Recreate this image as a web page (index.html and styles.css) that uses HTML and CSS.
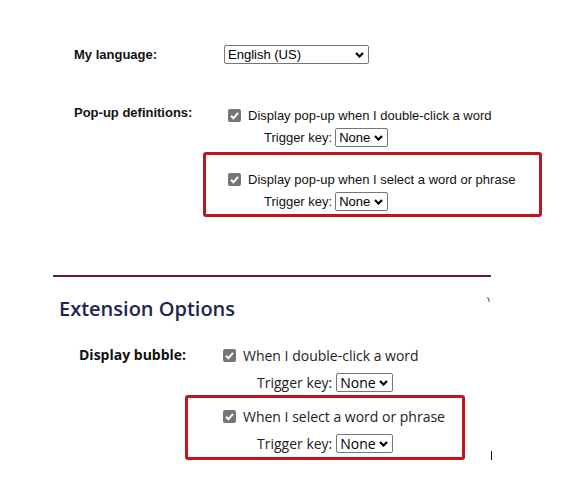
FILE: index.html
```html
<!DOCTYPE html>
<html lang="en">
<head>
<meta charset="utf-8">
<title>Options</title>
<link rel="stylesheet" href="styles.css">
</head>
<body>
<div class="page">
  <section class="site-settings">
    <div class="row row-lang">
      <div class="label">My language:</div>
      <div class="field">
        <span class="select-wrap">
          <select class="select select-lang"><option>English (US)</option></select>
          <svg class="chev" width="9" height="6" viewBox="0 0 9 6"><path d="M1 1 L4.5 4.5 L8 1" fill="none" stroke="#000" stroke-width="2.2"/></svg>
        </span>
      </div>
    </div>
    <div class="row row-popup">
      <div class="label">Pop-up definitions:</div>
      <div class="field">
        <div class="opt">
          <label class="check-line"><span class="cb"><svg width="13" height="13" viewBox="0 0 13 13"><rect width="13" height="13" rx="2" fill="#767676"/><path d="M3 6.8 L5.4 9.2 L10 3.8" fill="none" stroke="#fff" stroke-width="2"/></svg></span>Display pop-up when I double-click a word</label>
          <div class="trigger">Trigger key:<span class="select-wrap key"><select class="select select-key"><option>None</option></select><svg class="chev" width="9" height="6" viewBox="0 0 9 6"><path d="M1 1 L4.5 4.5 L8 1" fill="none" stroke="#000" stroke-width="2.2"/></svg></span></div>
        </div>
        <div class="opt highlight">
          <label class="check-line"><span class="cb"><svg width="13" height="13" viewBox="0 0 13 13"><rect width="13" height="13" rx="2" fill="#767676"/><path d="M3 6.8 L5.4 9.2 L10 3.8" fill="none" stroke="#fff" stroke-width="2"/></svg></span>Display pop-up when I select a word or phrase</label>
          <div class="trigger">Trigger key:<span class="select-wrap key"><select class="select select-key"><option>None</option></select><svg class="chev" width="9" height="6" viewBox="0 0 9 6"><path d="M1 1 L4.5 4.5 L8 1" fill="none" stroke="#000" stroke-width="2.2"/></svg></span></div>
        </div>
      </div>
    </div>
  </section>

  <hr class="divider">

  <section class="ext">
    <h2 class="ext-title">Extension Options</h2>
    <div class="row">
      <div class="label">Display bubble:</div>
      <div class="field">
        <div class="opt">
          <label class="check-line"><span class="cb"><svg width="13" height="13" viewBox="0 0 13 13"><rect width="13" height="13" rx="2" fill="#767676"/><path d="M3 6.8 L5.4 9.2 L10 3.8" fill="none" stroke="#fff" stroke-width="2"/></svg></span>When I double-click a word</label>
          <div class="trigger">Trigger key:<span class="select-wrap key"><select class="select select-key"><option>None</option></select><svg class="chev" width="9" height="6" viewBox="0 0 9 6"><path d="M1 1 L4.5 4.5 L8 1" fill="none" stroke="#000" stroke-width="2.2"/></svg></span></div>
        </div>
        <div class="opt highlight">
          <label class="check-line"><span class="cb"><svg width="13" height="13" viewBox="0 0 13 13"><rect width="13" height="13" rx="2" fill="#767676"/><path d="M3 6.8 L5.4 9.2 L10 3.8" fill="none" stroke="#fff" stroke-width="2"/></svg></span>When I select a word or phrase</label>
          <div class="trigger">Trigger key:<span class="select-wrap key"><select class="select select-key"><option>None</option></select><svg class="chev" width="9" height="6" viewBox="0 0 9 6"><path d="M1 1 L4.5 4.5 L8 1" fill="none" stroke="#000" stroke-width="2.2"/></svg></span></div>
        </div>
      </div>
    </div>
    <span class="tick-mark"></span>
    <span class="caret-mark"></span>
  </section>
</div>
</body>
</html>
```

FILE: styles.css
```css
html, body {
  margin: 0;
  padding: 0;
  background: #fff;
}

.page {
  width: 574px;
  position: relative;
}

/* ---------- shared controls ---------- */
.select-wrap {
  position: relative;
  display: inline-flex;
}

.select {
  -webkit-appearance: none;
  appearance: none;
  margin: 0;
  height: 19px;
  border: 1px solid #767676;
  border-radius: 2px;
  background: #fff;
  color: #000;
  padding: 0 16px 0 3px;
  box-sizing: border-box;
  outline: none;
}

.chev {
  position: absolute;
  top: 7px;
  pointer-events: none;
}

.cb {
  display: inline-flex;
  width: 13px;
  height: 13px;
  margin: 0 7px 0 4px;
  flex: none;
}

.row {
  display: grid;
  align-items: start;
}

.label {
  font-weight: bold;
}

.check-line {
  display: flex;
  align-items: center;
  white-space: nowrap;
}

.trigger {
  display: flex;
  align-items: center;
  white-space: nowrap;
}

.highlight {
  border: 3px solid #c1141d;
  border-radius: 3px;
  box-sizing: border-box;
}

/* ---------- top section (site settings) ---------- */
.site-settings {
  font-family: "Liberation Sans", Arial, sans-serif;
  font-size: 13px;
  color: #111;
  padding: 45px 0 0 74px;
}

.site-settings .row {
  grid-template-columns: 150px auto;
}

.row-lang {
  align-items: center;
  height: 19px;
}

.row-lang .label {
  line-height: 19px;
}

.site-settings .select {
  font-family: "Liberation Sans", Arial, sans-serif;
  font-size: 13px;
}

.select-lang {
  width: 145px;
}

.select-wrap .chev {
  right: 5px;
}

.row-popup {
  margin-top: 40px;
}

.row-popup .label {
  line-height: 20px;
  margin-top: -1px;
}

.site-settings .check-line {
  height: 20px;
  margin-top: 1px;
}

.site-settings .trigger {
  height: 21px;
  margin-top: 2px;
  padding-left: 40px;
}

.site-settings .key {
  margin-left: 3px;
}

.site-settings .select-key {
  width: 53px;
}

.site-settings .highlight {
  width: 339px;
  margin: 4px 0 0 -21px;
  padding: 13px 0 2px 18px;
}

/* ---------- divider ---------- */
.divider {
  margin: 58px 0 0 53px;
  width: 438px;
  height: 2px;
  border: 0;
  background: #6a1a26;
}

/* ---------- extension options ---------- */
.ext {
  font-family: "Open Sans", "Noto Sans", sans-serif;
  font-size: 14px;
  color: #222;
  padding-left: 59px;
}

.ext-title {
  margin: 18px 0 0;
  font-size: 20px;
  line-height: 27px;
  font-weight: 600;
  color: #1b2652;
}

.ext .row {
  grid-template-columns: 140px auto;
  margin-top: 22px;
  margin-left: 20px;
}

.ext .label {
  line-height: 22px;
  color: #111;
}

.ext .check-line {
  height: 22px;
}

.ext .trigger {
  height: 21px;
  margin-top: 6px;
  padding-left: 38px;
}

.ext .select {
  font-family: "Open Sans", "Noto Sans", sans-serif;
  font-size: 14px;
  height: 19px;
  line-height: 17px;
}

.ext .key {
  margin-left: 4px;
}

.ext .select-key {
  width: 57px;
}

.ext .highlight {
  width: 280px;
  margin: 2px 0 0 -34px;
  padding: 7px 0 3px 31px;
}

.tick-mark {
  position: absolute;
  left: 488px;
  top: 297px;
  width: 1px;
  height: 5px;
  background: #444;
  transform: rotate(-20deg);
}

.caret-mark {
  position: absolute;
  left: 491px;
  top: 451px;
  width: 1px;
  height: 14px;
  background: #111;
}
```
